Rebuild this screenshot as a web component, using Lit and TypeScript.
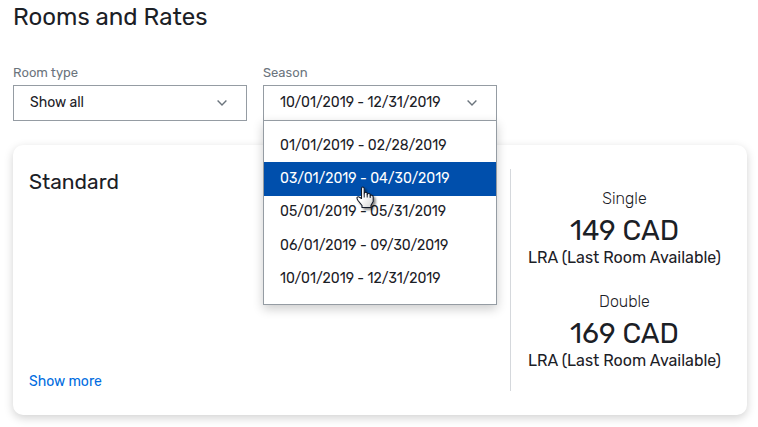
import { LitElement, html, css } from "lit";
import { customElement, property, state } from "lit/decorators.js";

interface Rate {
  occupancy: string;
  price: string;
  plan: string;
}

const SEASONS = [
  "01/01/2019 - 02/28/2019",
  "03/01/2019 - 04/30/2019",
  "05/01/2019 - 05/31/2019",
  "06/01/2019 - 09/30/2019",
  "10/01/2019 - 12/31/2019",
];

const RATES: Rate[] = [
  { occupancy: "Single", price: "149 CAD", plan: "LRA (Last Room Available)" },
  { occupancy: "Double", price: "169 CAD", plan: "LRA (Last Room Available)" },
];

@customElement("select-field")
class SelectField extends LitElement {
  @property() label = "";
  @property() value = "";
  @property({ type: Array }) options: string[] = [];
  @property({ type: Boolean }) open = false;
  @property({ type: Number }) active = -1;

  static styles = css`
    :host {
      display: block;
      position: relative;
    }
    .label {
      display: block;
      font-size: 13px;
      line-height: 16px;
      margin-bottom: 4px;
      color: #6b747d;
    }
    .control {
      display: grid;
      align-items: center;
    }
    .select {
      grid-area: 1 / 1;
      appearance: none;
      box-sizing: border-box;
      width: 100%;
      height: 36px;
      margin: 0;
      padding: 0 40px 2px 16px;
      border: 1px solid #959ca3;
      border-radius: 0;
      background: #fff;
      color: #1b2026;
      font-family: inherit;
      font-size: 14px;
      outline: none;
    }
    .chevron {
      grid-area: 1 / 1;
      justify-self: end;
      margin-right: 20px;
      pointer-events: none;
    }
    .menu {
      position: absolute;
      z-index: 1;
      top: calc(100% - 1px);
      left: 0;
      right: 0;
      box-sizing: border-box;
      height: 185px;
      display: grid;
      grid-auto-rows: 1fr;
      padding: 8px 0;
      border: 1px solid #959ca3;
      background: #fff;
      box-shadow: 0 4px 10px rgba(0, 0, 0, 0.2);
    }
    .option {
      border: 0;
      margin: 0;
      padding: 0 16px 1px;
      background: none;
      color: #1b2026;
      font-family: inherit;
      font-size: 14px;
      text-align: left;
      cursor: pointer;
    }
    .option.active {
      background: #004fac;
      color: #fff;
    }
    .cursor {
      position: absolute;
      z-index: 2;
      left: 93px;
      top: 121px;
      pointer-events: none;
      filter: drop-shadow(2px 2px 1px rgba(0, 0, 0, 0.45));
    }
  `;

  private pick(value: string) {
    this.value = value;
    this.open = false;
  }

  render() {
    return html`
      <label class="label" for="field">${this.label}</label>
      <div class="control">
        <select class="select" id="field">
          ${this.options.map(
            (o) => html`<option ?selected=${o === this.value}>${o}</option>`
          )}
        </select>
        <svg class="chevron" width="10" height="6" viewBox="0 0 10 6" aria-hidden="true">
          <path d="M.6.6 5 5 9.4.6" fill="none" stroke="#6b747d" stroke-width="1.4" />
        </svg>
      </div>
      ${this.open
        ? html`
            <div class="menu" role="listbox" aria-label=${this.label}>
              ${this.options.map(
                (o, i) => html`<button
                  class="option ${i === this.active ? "active" : ""}"
                  role="option"
                  aria-selected=${o === this.value ? "true" : "false"}
                  @mouseenter=${() => (this.active = i)}
                  @click=${() => this.pick(o)}
                >${o}</button>`
              )}
            </div>
            <svg class="cursor" width="20" height="24" viewBox="0 0 20 24" aria-hidden="true">
              <defs>
                <linearGradient id="hand" x1="0" y1="0" x2="1" y2="1">
                  <stop offset=".45" stop-color="#fff" />
                  <stop offset="1" stop-color="#cfcfcf" />
                </linearGradient>
              </defs>
              <path
                d="M5.5 12.5V2.7Q5.5 1 6.8 1T8.2 2.7V7.8Q8.4 6.3 9.8 6.3T11.2 8V8.8Q11.4 7.5 12.8 7.5T14.2 9.2V10Q14.4 8.8 15.8 9.2T17.2 11V15.5L15 19.3V21.5H6V19.5L2 14.5Q.4 12 1.3 11.2T3.5 11.2Z"
                fill="url(#hand)"
                stroke="#111827"
                stroke-width="1.1"
                stroke-linejoin="round"
              />
              <path d="M8.2 7.8V11.5M11.2 8.5V11.5M14.2 9.5V12" stroke="#111827" fill="none" />
            </svg>
          `
        : ""}
    `;
  }
}

@customElement("app-root")
class AppRoot extends LitElement {
  @state() private expanded = false;

  static styles = css`
    :host {
      display: block;
      padding: 1px 11px 12px 13px;
      background: #fff;
      color: #1b2026;
      font-family: Rubik, Roboto, "Liberation Sans", sans-serif;
    }
    .title {
      margin: 0;
      font-size: 24px;
      font-weight: 400;
      line-height: 32px;
    }
    .filters {
      display: grid;
      grid-template-columns: repeat(3, 1fr);
      gap: 16px;
      margin-top: 32px;
    }
    .card {
      display: flex;
      margin-top: 24px;
      padding: 24px 9px 24px 16px;
      border-radius: 10px;
      background: #fff;
      box-shadow: 0 3px 10px rgba(0, 0, 0, 0.18);
    }
    .room {
      flex: 1;
      display: flex;
      flex-direction: column;
      justify-content: space-between;
      align-items: flex-start;
    }
    .name {
      margin: 0;
      font-size: 21px;
      font-weight: 400;
      line-height: 26px;
    }
    .more {
      border: 0;
      margin: 0;
      padding: 0;
      background: none;
      color: #006ce0;
      font-family: inherit;
      font-size: 14px;
      line-height: 18px;
      cursor: pointer;
    }
    .rates {
      flex: 0 0 auto;
      display: flex;
      flex-direction: column;
      gap: 23px;
      padding: 17px 17px 22px;
      border-left: 1px solid #d5d8dc;
      text-align: center;
    }
    .occupancy,
    .price,
    .plan {
      margin: 0;
    }
    .occupancy {
      font-size: 16px;
      font-weight: 300;
      line-height: 26px;
    }
    .price {
      font-size: 28px;
      line-height: 38px;
    }
    .plan {
      font-size: 16px;
      line-height: 16px;
    }
  `;

  render() {
    return html`
      <h1 class="title">Rooms and Rates</h1>
      <div class="filters">
        <select-field label="Room type" value="Show all" .options=${["Show all", "Standard"]}></select-field>
        <select-field
          label="Season"
          value="10/01/2019 - 12/31/2019"
          .options=${SEASONS}
          .active=${1}
          open
        ></select-field>
      </div>
      <section class="card">
        <div class="room">
          <h2 class="name">Standard</h2>
          <button class="more" aria-expanded=${this.expanded ? "true" : "false"} @click=${() => (this.expanded = !this.expanded)}>
            Show more
          </button>
        </div>
        <div class="rates">
          ${RATES.map(
            (r) => html`<div>
              <p class="occupancy">${r.occupancy}</p>
              <p class="price">${r.price}</p>
              <p class="plan">${r.plan}</p>
            </div>`
          )}
        </div>
      </section>
    `;
  }
}
